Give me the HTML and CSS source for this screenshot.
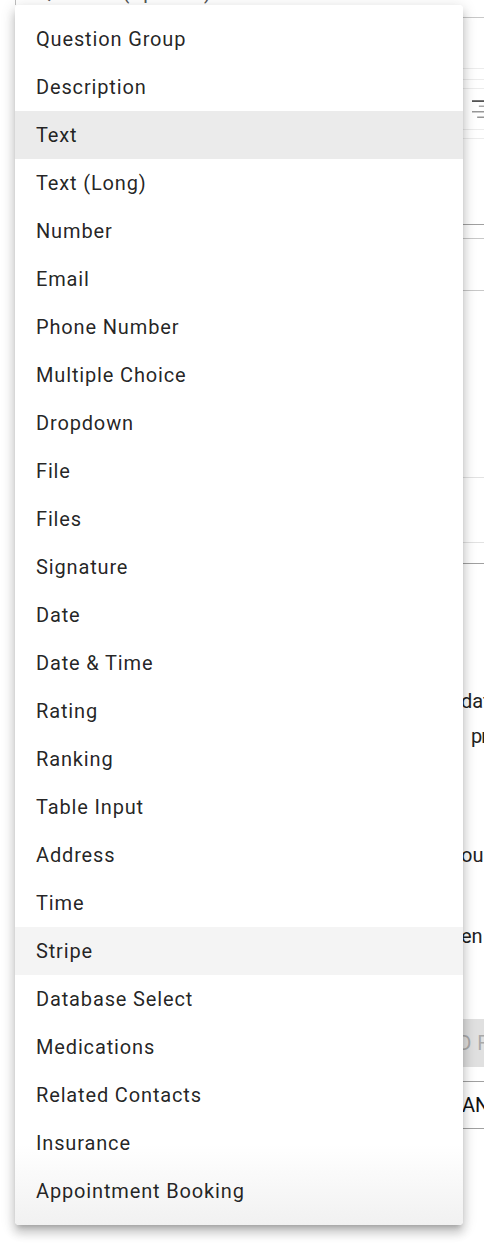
FILE: index.html
```html
<!DOCTYPE html>
<html lang="en">
<head>
<meta charset="utf-8">
<title>Field type menu</title>
<link rel="stylesheet" href="styles.css">
</head>
<body>
<div class="page">
  <div class="top-block"><div class="top-field"><span class="top-label">Question (Optional)</span></div></div>
  <div class="hr hr-mid"></div>
  <div class="sp" style="height:50px"></div>
  <div class="hr hr-faint"></div>
  <div class="sp" style="height:10px"></div>
  <div class="hr hr-faint"></div>
  <div class="sp" style="height:8px"></div>
  <div class="hr hr-faint"></div>
  <div class="sp" style="height:10px"></div>
  <div class="icon-row">
    <svg class="sort-icon" width="14" height="20" viewBox="0 0 14 20">
      <rect x="0" y="0" width="14" height="1.5" fill="#111"/>
      <rect x="8" y="6" width="6" height="1.5" fill="#999"/>
      <rect x="0" y="12.5" width="14" height="1.5" fill="#888"/>
      <rect x="6" y="19" width="8" height="1" fill="#444"/>
    </svg>
  </div>
  <div class="sp" style="height:10px"></div>
  <div class="hr hr-faint"></div>
  <div class="sp" style="height:8px"></div>
  <div class="hr hr-faint"></div>
  <div class="sp" style="height:85px"></div>
  <div class="hr hr-dark"></div>
  <div class="sp" style="height:13px"></div>
  <div class="hr hr-mid"></div>
  <div class="sp" style="height:51px"></div>
  <div class="hr hr-mid"></div>
  <div class="sp" style="height:186px"></div>
  <div class="hr hr-light"></div>
  <div class="sp" style="height:64px"></div>
  <div class="hr hr-light"></div>
  <div class="sp" style="height:20px"></div>
  <div class="hr hr-dark"></div>
  <div class="sp" style="height:125px"></div>
  <div class="line line-a">data</div>
  <div class="sp" style="height:11px"></div>
  <div class="line line-b">pr</div>
  <div class="sp" style="height:95px"></div>
  <div class="line line-a">ou</div>
  <div class="sp" style="height:57px"></div>
  <div class="line line-a">en</div>
  <div class="sp" style="height:71px"></div>
  <div class="btn-row"><span class="btn-text">ADD F</span></div>
  <div class="sp" style="height:14px"></div>
  <div class="hr hr-dark"></div>
  <div class="an-row"><span class="an-text">AN</span></div>
  <div class="hr hr-dark"></div>
</div>

<ul class="menu">
  <li class="item">Question Group</li>
  <li class="item">Description</li>
  <li class="item selected">Text</li>
  <li class="item">Text (Long)</li>
  <li class="item">Number</li>
  <li class="item">Email</li>
  <li class="item">Phone Number</li>
  <li class="item">Multiple Choice</li>
  <li class="item">Dropdown</li>
  <li class="item">File</li>
  <li class="item">Files</li>
  <li class="item">Signature</li>
  <li class="item">Date</li>
  <li class="item">Date &amp; Time</li>
  <li class="item">Rating</li>
  <li class="item">Ranking</li>
  <li class="item">Table Input</li>
  <li class="item">Address</li>
  <li class="item">Time</li>
  <li class="item hover">Stripe</li>
  <li class="item">Database Select</li>
  <li class="item">Medications</li>
  <li class="item">Related Contacts</li>
  <li class="item">Insurance</li>
  <li class="item">Appointment Booking</li>
</ul>
</body>
</html>
```

FILE: styles.css
```css
html, body {
  margin: 0;
  padding: 0;
}
body {
  width: 484px;
  height: 1244px;
  overflow: hidden;
  background: #ffffff;
  font-family: Roboto, "Liberation Sans", sans-serif;
  position: relative;
}
.page {
  width: 484px;
  box-sizing: border-box;
  padding-left: 20px;
  display: flex;
  flex-direction: column;
}
.sp { flex: none; }
.hr {
  flex: none;
  height: 1px;
}
.hr-faint { background: #ececec; }
.hr-light { background: #e2e2e2; }
.hr-mid { background: #c8c8c8; }
.hr-dark { background: #a0a0a0; }

.top-block {
  height: 17px;
  flex: none;
  margin-left: -20px;
}
.top-field {
  margin-left: 15px;
  height: 5px;
  border-left: 1px solid #bdbdbd;
  overflow: hidden;
}
.top-label {
  display: block;
  margin-top: -20px;
  padding-left: 22px;
  font-size: 20px;
  line-height: 24px;
  color: #555;
  white-space: nowrap;
}
.icon-row {
  height: 20px;
  flex: none;
  display: flex;
  padding-left: 452px;
}
.line {
  flex: none;
  height: 24px;
  font-size: 20px;
  line-height: 24px;
  color: #222;
  white-space: nowrap;
}
.line-a { padding-left: 441px; }
.line-b { padding-left: 451px; letter-spacing: -1px; }
.btn-row {
  flex: none;
  height: 48px;
  background: #e0e0e0;
  display: flex;
  align-items: center;
  padding-left: 411px;
}
.btn-text {
  font-size: 20px;
  color: #a9a9a9;
  letter-spacing: 0.5px;
  white-space: nowrap;
}
.an-row {
  flex: none;
  height: 46px;
  display: flex;
  align-items: center;
  padding-left: 442px;
}
.an-text {
  font-size: 20px;
  color: #111;
  white-space: nowrap;
}

.menu {
  position: absolute;
  left: 15px;
  top: 5px;
  width: 448px;
  margin: 0;
  padding: 10px 0;
  list-style: none;
  border-radius: 4px;
  background: linear-gradient(to bottom, #ffffff 0, #ffffff calc(100% - 80px), #f1f1f1 100%);
  box-shadow: 0 5px 5px -3px rgba(0,0,0,0.2), 0 8px 10px 1px rgba(0,0,0,0.14), 0 3px 14px 2px rgba(0,0,0,0.12);
}
.item {
  height: 48px;
  display: flex;
  align-items: center;
  padding: 0 21px;
  font-size: 20px;
  letter-spacing: 0.85px;
  color: rgba(0,0,0,0.87);
  white-space: nowrap;
}
.item.selected { background: #ebebeb; }
.item.hover { background: #f4f4f4; }
```
